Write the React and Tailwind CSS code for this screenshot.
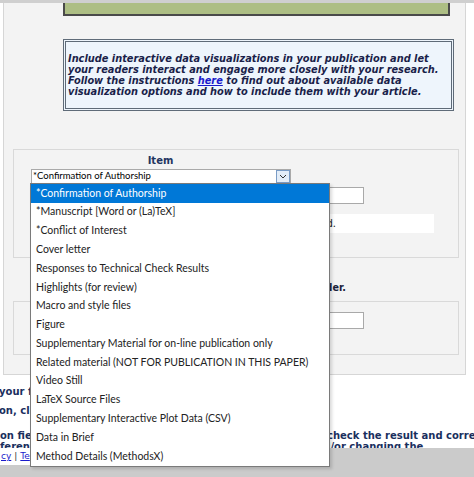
import React from 'react';

const ITEMS = [
  '*Confirmation of Authorship',
  '*Manuscript [Word or (La)TeX]',
  '*Conflict of Interest',
  'Cover letter',
  'Responses to Technical Check Results',
  'Highlights (for review)',
  'Macro and style files',
  'Figure',
  'Supplementary Material for on-line publication only',
  'Related material (NOT FOR PUBLICATION IN THIS PAPER)',
  'Video Still',
  'LaTeX Source Files',
  'Supplementary Interactive Plot Data (CSV)',
  'Data in Brief',
  'Method Details (MethodsX)',
];

const verdana = { fontFamily: '"DejaVu Sans", Verdana, sans-serif' };
const segoe = { fontFamily: 'Lato, "Noto Sans", sans-serif' };

function ItemDropdown() {
  return (
    <div
      className="absolute left-[30px] top-[183px] w-[300px] border border-[#7a7a7a] bg-white shadow-[2px_2px_3px_rgba(0,0,0,0.15)]"
      style={segoe}
    >
      {ITEMS.map((label, idx) => (
        <div
          key={label}
          className={
            idx === 0
              ? 'flex h-[18.8px] items-center whitespace-nowrap bg-[#0078d7] pl-[5px] text-[10.5px] text-white'
              : 'flex h-[18.8px] items-center whitespace-nowrap pl-[5px] text-[10.5px] text-[#222]'
          }
        >
          {label}
        </div>
      ))}
    </div>
  );
}

export default function App() {
  return (
    <div className="relative h-[477px] w-[474px] overflow-hidden bg-white" style={verdana}>
      <div className="h-[3px] bg-[#cfcfcf]" />

      <div className="ml-[3px] mr-[8px] h-[372px] border-x border-b border-[#d6d6d6] bg-[#f3f3f3]">
        <div className="ml-[59px] h-[13px] w-[387px] border-x-2 border-b-2 border-[#4a4a4a] bg-[#adbe84]" />

        <div className="ml-[59px] mt-[23px] h-[72px] w-[391px] border-[3px] border-double border-[#5f6b78] bg-[#eef5fc] pl-[2px] pt-[11px]">
          <p className="whitespace-nowrap text-[9.8px] font-bold italic leading-[11px] text-[#1a1f4a]">
            Include interactive data visualizations in your publication and let
            <br />
            your readers interact and engage more closely with your research.
            <br />
            Follow the instructions <span className="text-[#1a1acc] underline">here</span> to find out about available data
            <br />
            visualization options and how to include them with your article.
          </p>
        </div>

        <div className="ml-[9px] mt-[38px] h-[109px] w-[446px] border border-[#d9d9d9]">
          <div className="ml-[17px] w-[259px] pt-[3px] text-center text-[10px] font-bold text-[#1f3561]">Item</div>
          <div className="ml-[17px] mt-[1px] flex h-[15px] w-[260px] items-center border border-[#a9a9a9] bg-white">
            <span className="flex-1 pl-[1px] text-[9.5px] text-black" style={segoe}>
              *Confirmation of Authorship
            </span>
            <span className="flex h-[13px] w-[14px] items-center justify-center border border-[#7a9cc6] bg-[#e3edf8]">
              <svg width="8" height="5" viewBox="0 0 8 5" fill="none" stroke="#333" strokeWidth="1">
                <path d="M1 1l3 3 3-3" />
              </svg>
            </span>
          </div>
          <div className="ml-[276px] mt-[3px] h-[17px] w-[74px] border border-[#a9a9a9] bg-white" />
          <div className="ml-[276px] mt-[10px] flex h-[19px] w-[144px] items-center overflow-hidden bg-white">
            <div className="flex w-[46px] shrink-0 justify-end">
              <span className="whitespace-nowrap text-[10px] text-[#222]">is required.</span>
            </div>
          </div>
        </div>

        <div className="mt-[23px] w-[342px] text-right text-[9.6px] font-bold text-[#1a1f3a]">
          Please upload the files in the following order.
        </div>

        <div className="ml-[9px] mt-[6px] h-[54px] w-[446px] border border-[#d9d9d9] pt-[10px]">
          <div className="ml-[276px] h-[17px] w-[74px] border border-[#a9a9a9] bg-white" />
        </div>
      </div>

      <div className="h-[73px] overflow-hidden pt-[11px] text-[10px] font-bold leading-[11px] text-[#1a2f5e]">
        <div className="-ml-[1px] whitespace-nowrap">your files</div>
        <div className="mt-[8px] -ml-[1px] whitespace-nowrap">on, click</div>
        <div className="mt-[14px] flex whitespace-nowrap">
          <span className="w-[327px] shrink-0 overflow-hidden">on fields are filled. Please</span>
          <span>check the result and correct</span>
        </div>
        <div className="flex whitespace-nowrap">
          <span className="w-[327px] shrink-0 overflow-hidden">ferent or missing</span>
          <span>l/or changing the</span>
        </div>
      </div>

      <div className="relative h-[29px] bg-[#cbcbcb]">
        <div className="flex h-[17px] w-[31px] items-center gap-[3px] bg-white pl-[1px] text-[9px] text-[#1a1acc]">
          <span className="underline">cy</span>
          <span className="text-[#333]">|</span>
          <span className="underline">Te</span>
        </div>
      </div>

      <ItemDropdown />
    </div>
  );
}
